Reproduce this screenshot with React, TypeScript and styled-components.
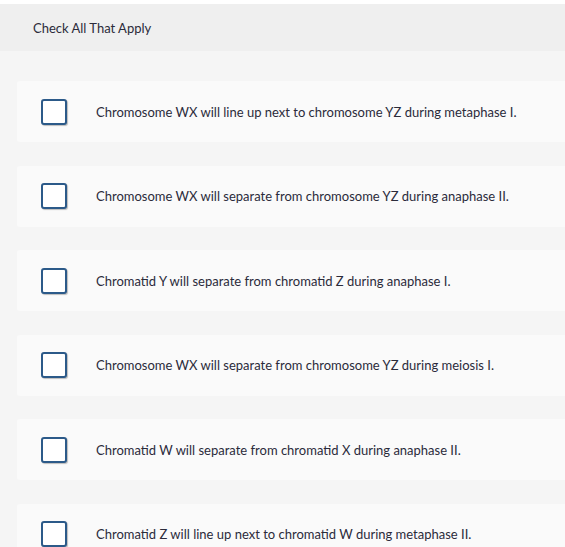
import React from "react";
import styled, { createGlobalStyle } from "styled-components";

const GlobalStyle = createGlobalStyle`
  html, body {
    margin: 0;
    padding: 0;
    background: #f5f5f5;
  }
  body {
    font-family: "Lato", "Liberation Sans", sans-serif;
  }
`;

const Page = styled.div`
  width: 565px;
  height: 547px;
  overflow: hidden;
  box-sizing: border-box;
  background: #f5f5f5;
  border-top: 4px solid #ffffff;
`;

const Header = styled.div`
  height: 47px;
  background: #efefef;
  display: flex;
  align-items: center;
  padding-left: 33px;
  font-size: 13px;
  color: #2b2b3a;
`;

const List = styled.div`
  display: flex;
  flex-direction: column;
  gap: 23.5px;
  padding: 30px 0 0 17px;
`;

const Card = styled.label`
  display: flex;
  align-items: center;
  height: 61px;
  background: #fafafa;
  border-radius: 3px 0 0 3px;
  padding-left: 24px;
  cursor: pointer;
`;

const Box = styled.span`
  flex: none;
  width: 22px;
  height: 22px;
  border: 2px solid #2c5a89;
  border-radius: 3px;
  background: #ffffff;
  box-shadow: 1px 1px 1px rgba(0, 0, 0, 0.25);
`;

const Label = styled.span`
  margin-left: 29px;
  font-size: 13px;
  color: #2b2b3a;
  white-space: nowrap;
`;

type OptionProps = {
  text: string;
};

function Option({ text }: OptionProps) {
  return (
    <Card>
      <Box />
      <Label>{text}</Label>
    </Card>
  );
}

const options = [
  "Chromosome WX will line up next to chromosome YZ during metaphase I.",
  "Chromosome WX will separate from chromosome YZ during anaphase II.",
  "Chromatid Y will separate from chromatid Z during anaphase I.",
  "Chromosome WX will separate from chromosome YZ during meiosis I.",
  "Chromatid W will separate from chromatid X during anaphase II.",
  "Chromatid Z will line up next to chromatid W during metaphase II.",
];

export default function App() {
  return (
    <>
      <GlobalStyle />
      <Page>
        <Header>Check All That Apply</Header>
        <List>
          {options.map(o => (
            <Option key={o} text={o} />
          ))}
        </List>
      </Page>
    </>
  );
}
